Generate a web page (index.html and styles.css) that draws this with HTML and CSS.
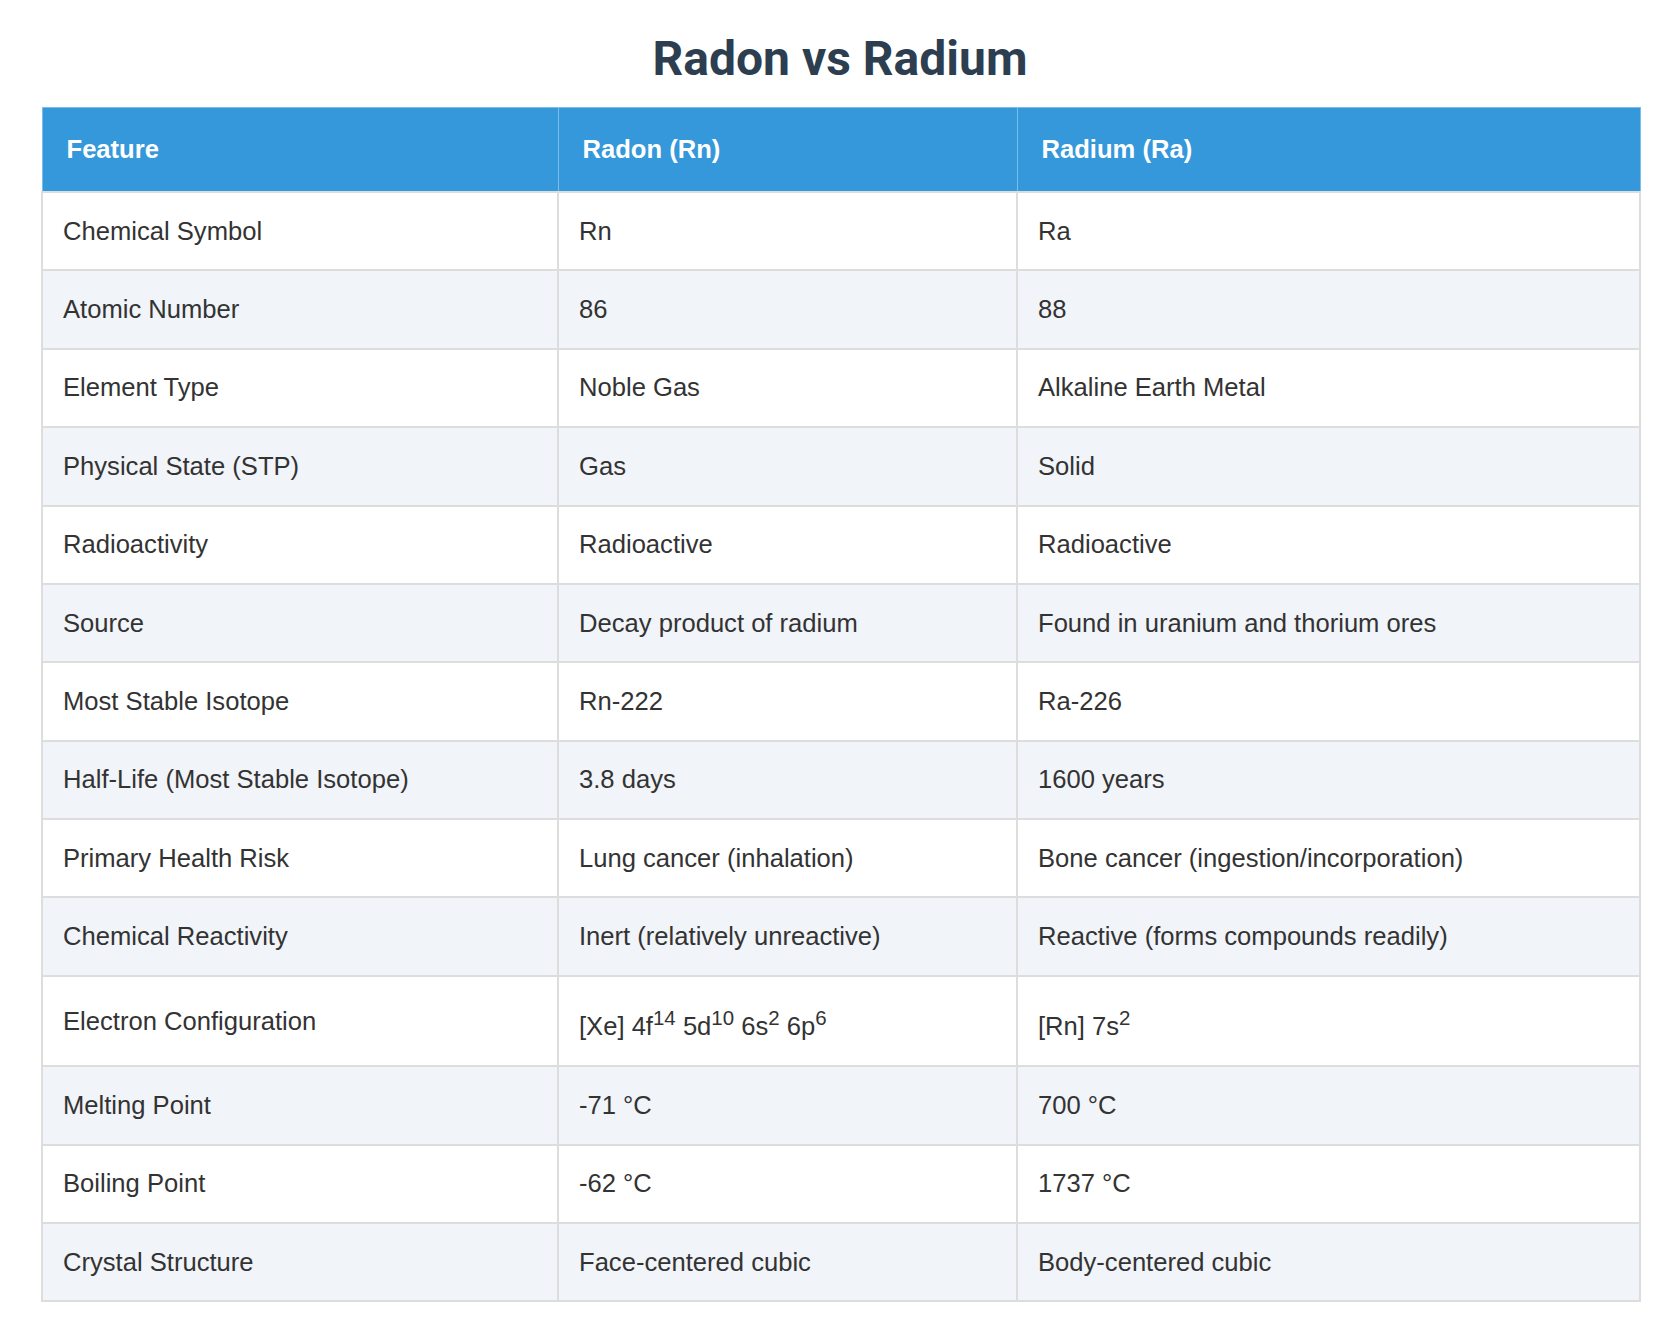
FILE: index.html
```html
<!DOCTYPE html>
<html lang="en">
<head>
<meta charset="utf-8">
<title>Radon vs Radium</title>
<link rel="stylesheet" href="styles.css">
</head>
<body>
<h1 class="title">Radon vs Radium</h1>
<table class="cmp">
  <colgroup>
    <col class="c1"><col class="c2"><col class="c3">
  </colgroup>
  <thead>
    <tr><th>Feature</th><th>Radon (Rn)</th><th>Radium (Ra)</th></tr>
  </thead>
  <tbody>
    <tr><td>Chemical Symbol</td><td>Rn</td><td>Ra</td></tr>
    <tr><td>Atomic Number</td><td>86</td><td>88</td></tr>
    <tr><td>Element Type</td><td>Noble Gas</td><td>Alkaline Earth Metal</td></tr>
    <tr><td>Physical State (STP)</td><td>Gas</td><td>Solid</td></tr>
    <tr><td>Radioactivity</td><td>Radioactive</td><td>Radioactive</td></tr>
    <tr><td>Source</td><td>Decay product of radium</td><td>Found in uranium and thorium ores</td></tr>
    <tr><td>Most Stable Isotope</td><td>Rn-222</td><td>Ra-226</td></tr>
    <tr><td>Half-Life (Most Stable Isotope)</td><td>3.8 days</td><td>1600 years</td></tr>
    <tr><td>Primary Health Risk</td><td>Lung cancer (inhalation)</td><td>Bone cancer (ingestion/incorporation)</td></tr>
    <tr><td>Chemical Reactivity</td><td>Inert (relatively unreactive)</td><td>Reactive (forms compounds readily)</td></tr>
    <tr><td>Electron Configuration</td><td>[Xe] 4f<sup>14</sup> 5d<sup>10</sup> 6s<sup>2</sup> 6p<sup>6</sup></td><td>[Rn] 7s<sup>2</sup></td></tr>
    <tr><td>Melting Point</td><td>-71 °C</td><td>700 °C</td></tr>
    <tr><td>Boiling Point</td><td>-62 °C</td><td>1737 °C</td></tr>
    <tr><td>Crystal Structure</td><td>Face-centered cubic</td><td>Body-centered cubic</td></tr>
  </tbody>
</table>
</body>
</html>
```
FILE: styles.css
```css
html, body {
  margin: 0;
  background: #ffffff;
}
body {
  padding: 31px 41px 0;
  font-family: "Liberation Sans", Arial, sans-serif;
  color: #333333;
}
.title {
  margin: 0 0 20px;
  font-family: Roboto, "Liberation Sans", sans-serif;
  font-weight: 700;
  font-size: 48px;
  line-height: 56px;
  text-align: center;
  color: #2c3e50;
}
.cmp {
  width: 1598px;
  border-collapse: collapse;
  table-layout: fixed;
  font-size: 25.6px;
}
.c1 { width: 516px; }
.c2 { width: 459px; }
.c3 { width: 623px; }
.cmp th {
  background: #3498db;
  color: #ffffff;
  font-weight: 700;
  text-align: left;
  padding: 27px 23px 27px 24px;
  border: 1px solid #7dbde9;
  line-height: 29px;
}
.cmp td {
  padding: 23.7px 19px 23.7px 20px;
  border: 2.5px solid #dddddd;
  line-height: 29px;
  text-align: left;
}
.cmp tbody tr:nth-child(odd) td { background: #ffffff; }
.cmp tbody tr:nth-child(even) td { background: #f1f4f9; }
.cmp sup {
  font-size: 0.8em;
  vertical-align: 0.5em;
  line-height: 36px;
}
```
